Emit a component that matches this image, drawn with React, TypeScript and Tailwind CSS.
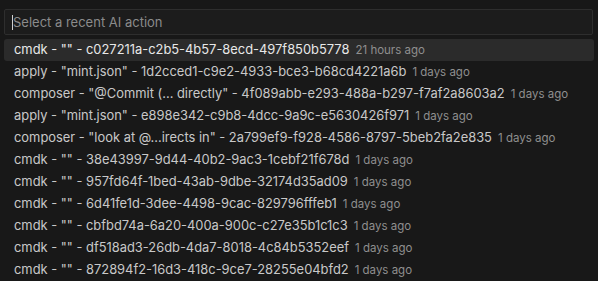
import React from "react";

const rows: [string, string][] = [
  ['cmdk - "" - c027211a-c2b5-4b57-8ecd-497f850b5778', "21 hours ago"],
  ['apply - "mint.json" - 1d2cced1-c9e2-4933-bce3-b68cd4221a6b', "1 days ago"],
  ['composer - "@Commit (... directly" - 4f089abb-e293-488a-b297-f7af2a8603a2', "1 days ago"],
  ['apply - "mint.json" - e898e342-c9b8-4dcc-9a9c-e5630426f971', "1 days ago"],
  ['composer - "look at @...irects in" - 2a799ef9-f928-4586-8797-5beb2fa2e835', "1 days ago"],
  ['cmdk - "" - 38e43997-9d44-40b2-9ac3-1cebf21f678d', "1 days ago"],
  ['cmdk - "" - 957fd64f-1bed-43ab-9dbe-32174d35ad09', "1 days ago"],
  ['cmdk - "" - 6d41fe1d-3dee-4498-9cac-829796fffeb1', "1 days ago"],
  ['cmdk - "" - cbfbd74a-6a20-400a-900c-c27e35b1c1c3', "1 days ago"],
  ['cmdk - "" - df518ad3-26db-4da7-8018-4c84b5352eef', "1 days ago"],
  ['cmdk - "" - 872894f2-16d3-418c-9ce7-28255e04bfd2', "1 days ago"],
];

export default function App() {
  return (
    <div
      className="w-[598px] h-[281px] overflow-hidden bg-[#181818] pt-[9px] px-[4px]"
      style={{ fontFamily: 'Inter, "Noto Sans", sans-serif' }}
    >
      <div className="w-[589px] h-[26px] border border-[#2e2e2e] bg-[#1c1c1c] rounded-[2px] flex items-center pl-[7px] pt-px">
        <span className="w-px h-[15px] bg-[#d0d0d0]" />
        <span className="text-[13px] text-[#8b8b8b] leading-none">Select a recent AI action</span>
      </div>
      <div className="mt-[4px] flex flex-col">
        {rows.map(([label, time], i) => (
          <div
            key={i}
            className={`h-[22px] flex items-center pl-[10px] pt-px whitespace-nowrap rounded-[3px] ${
              i === 0 ? "bg-[#2b2b2b] w-[590px]" : ""
            }`}
          >
            <span
              className={`text-[12.9px] leading-none ${
                i === 0 ? "text-[#e8e8e8]" : "text-[#c8c8c8]"
              }`}
            >
              {label}
            </span>
            <span className="ml-[6px] text-[11.5px] text-[#8f8f8f] leading-none">{time}</span>
          </div>
        ))}
      </div>
    </div>
  );
}
